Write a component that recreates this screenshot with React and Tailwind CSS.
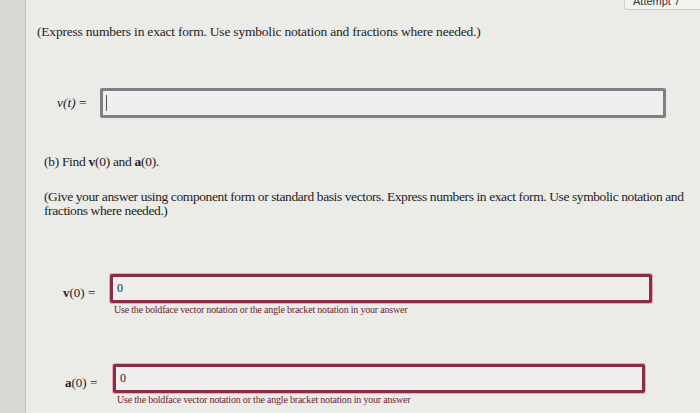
export default function App() {
  const serif = { fontFamily: '"Liberation Serif", "Times New Roman", serif' };
  return (
    <div className="w-[700px] h-[413px] overflow-hidden flex bg-[#e6e6e3] text-[#1e1e1e]" style={serif}>
      <div className="w-[26px] shrink-0 bg-[#d7d7d3] border-r border-[#c4c4c0]" />
      <div className="flex-1 flex flex-col bg-[#ebebe8]">
        <div className="h-[10px] flex justify-end">
          <div className="w-[76px] h-[10px] bg-[#f2f2f0] border-l border-b border-[#cfcfcb] rounded-bl-[3px] text-[11px] leading-[6px] text-[#333] overflow-hidden" style={{ fontFamily: '"Liberation Sans", Arial, sans-serif' }}>
            <span className="block -mt-[2px] pl-[8px]">Attempt 7</span>
          </div>
        </div>
        <div className="pl-[11px] pt-[14px] text-[13.5px] tracking-[-0.2px] leading-[16px]">
          (Express numbers in exact form. Use symbolic notation and fractions where needed.)
        </div>
        <div className="flex items-center mt-[48px] pl-[31px]">
          <span className="w-[43px] text-[13.5px] italic">
            v(t) <span className="not-italic">=</span>
          </span>
          <div className="w-[566px] h-[30px] border-[3px] border-[#7d8084] bg-[#eeefee] rounded-[2px] flex items-center pl-[3px]">
            <div className="w-px h-[16px] bg-[#555]" />
          </div>
        </div>
        <div className="pl-[18px] mt-[36px] text-[13.5px] leading-[16px] tracking-[-0.3px]">
          (b) Find <b>v</b>(0) and <b>a</b>(0).
        </div>
        <div className="pl-[18px] pr-[2px] mt-[20px] text-[13.5px] leading-[14px] tracking-[-0.4px]">
          (Give your answer using component form or standard basis vectors. Express numbers in exact form. Use symbolic notation and fractions where needed.)
        </div>
        <div className="flex mt-[56px] pl-[37px]">
          <span className="w-[47px] text-[13px] pt-[9px]"><b>v</b>(0) =</span>
          <div className="flex flex-col">
            <div className="w-[542px] h-[29px] border-[3px] border-[#8a2c46] bg-[#efefed] rounded-[2px] shadow-[0_0_0_1px_#e9a8b8] text-[12px] pl-[4px] pt-[2px] leading-[18px]">0</div>
            <div className="text-[10px] text-[#6e1e30] leading-[12px] pl-[4px] pt-[1px] tracking-[-0.2px]">
              Use the boldface vector notation or the angle bracket notation in your answer
            </div>
          </div>
        </div>
        <div className="flex mt-[48px] pl-[39px]">
          <span className="w-[48px] text-[13px] pt-[9px]"><b>a</b>(0) =</span>
          <div className="flex flex-col">
            <div className="w-[532px] h-[29px] border-[3px] border-[#8a2c46] bg-[#efefed] rounded-[2px] shadow-[0_0_0_1px_#e9a8b8] text-[12px] pl-[4px] pt-[2px] leading-[18px]">0</div>
            <div className="text-[10px] text-[#6e1e30] leading-[12px] pl-[4px] pt-[1px] tracking-[-0.2px]">
              Use the boldface vector notation or the angle bracket notation in your answer
            </div>
          </div>
        </div>
      </div>
    </div>
  );
}
